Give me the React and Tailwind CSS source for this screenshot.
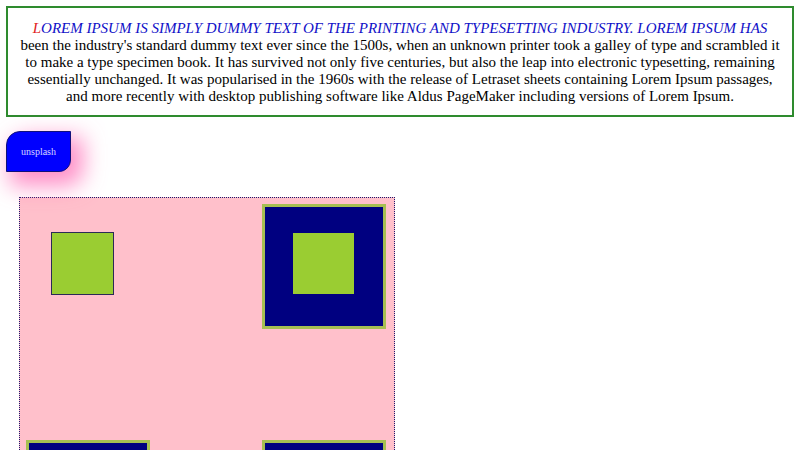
const NavyBox = () => {
  return (
    <div className="w-[124px] h-[125px] bg-[#000080] border-[3px] border-[#a6bf52] pl-[28px] pt-[26px]">
      <div className="w-[61px] h-[61px] bg-[#9acd32]"></div>
    </div>
  );
};

const App = () => {
  return (
    <div className="min-h-screen bg-white font-['Liberation_Serif',serif] pt-[6px]">
      <div className="mx-[6px] border-2 border-[#2e8b2e] px-3 pt-[12px] pb-[10px]">
        <p className="text-center text-[15px] leading-[17px] text-black first-line:uppercase first-line:italic first-line:text-[#1010c8] first-letter:text-[#e02020]">
          Lorem Ipsum is simply dummy text of the printing and typesetting industry. Lorem Ipsum has been the industry's standard dummy text ever since the 1500s, when an unknown printer took a galley of type and scrambled it to make a type specimen book. It has survived not only five centuries, but also the leap into electronic typesetting, remaining essentially unchanged. It was popularised in the 1960s with the release of Letraset sheets containing Lorem Ipsum passages, and more recently with desktop publishing software like Aldus PageMaker including versions of Lorem Ipsum.
        </p>
      </div>

      <div className="mt-[14px] ml-[6px]">
        <button className="w-[65px] h-[41px] bg-[#0000ff] border border-[#10107a] rounded-tl-[14px] rounded-br-[12px] text-[10px] text-[#d4d4ff] font-['Liberation_Serif',serif] shadow-[8px_10px_22px_4px_rgba(255,105,180,0.75)]">
          unsplash
        </button>
      </div>

      <div className="mt-[25px] ml-[19px] w-[376px] bg-[#ffc0cb] border border-dotted border-[#1a1a6e] pt-[6px] pl-[6px] pr-[8px] pb-6 flex flex-wrap justify-between gap-y-[111px]">
        <div className="w-[124px] h-[125px] pl-[25px] pt-[28px]">
          <div className="w-[63px] h-[63px] bg-[#9acd32] border border-[#2a2a55]"></div>
        </div>
        <NavyBox />
        <NavyBox />
        <NavyBox />
      </div>
    </div>
  );
};

export default App;
